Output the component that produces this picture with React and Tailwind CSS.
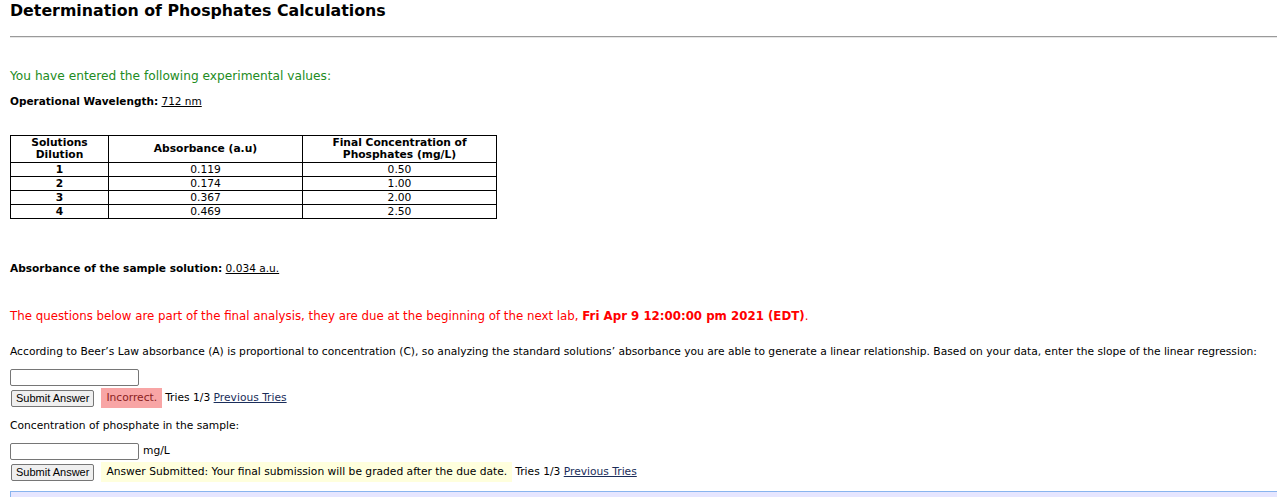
export default function App() {
  const rows = [
    ['1', '0.119', '0.50'],
    ['2', '0.174', '1.00'],
    ['3', '0.367', '2.00'],
    ['4', '0.469', '2.50'],
  ]

  return (
    <div className="min-h-[497px] bg-white pl-[10px] font-['DejaVu_Sans',Verdana,sans-serif] text-[12px] text-black">
      <h1 className="pt-[1px] text-[15.8px] font-bold leading-[19px]">Determination of Phosphates Calculations</h1>
      <div className="mt-[16px] h-[2px] border-t border-[#9a9a9a] border-b-[#e6e6e6] border-b" />

      <p className="mt-[30px] text-[12.2px] leading-[16px] text-[#228b22]">You have entered the following experimental values:</p>
      <p className="mt-[10px] text-[10.5px] leading-[14px]">
        <b>Operational Wavelength:</b> <span className="underline">712 nm</span>
      </p>

      <table className="mt-[27px] w-[487px] border-collapse border border-black text-[10.7px] leading-[12px]">
        <thead>
          <tr className="h-[27px]">
            <th className="w-[98px] border border-black font-bold">Solutions<br />Dilution</th>
            <th className="w-[194px] border border-black font-bold">Absorbance (a.u)</th>
            <th className="border border-black font-bold">Final Concentration of<br />Phosphates (mg/L)</th>
          </tr>
        </thead>
        <tbody>
          {rows.map((r) => (
            <tr key={r[0]} className="h-[14px]">
              <td className="border border-black text-center font-bold">{r[0]}</td>
              <td className="border border-black text-center">{r[1]}</td>
              <td className="border border-black text-center">{r[2]}</td>
            </tr>
          ))}
        </tbody>
      </table>

      <p className="mt-[42px] text-[10.6px] leading-[14px]">
        <b>Absorbance of the sample solution:</b> <span className="underline">0.034 a.u.</span>
      </p>

      <p className="mt-[33px] text-[11.8px] leading-[16px] text-[#ff0000]">
        The questions below are part of the final analysis, they are due at the beginning of the next lab,{' '}
        <b>Fri Apr 9 12:00:00 pm 2021 (EDT)</b>.
      </p>

      <p className="mt-[21px] whitespace-nowrap text-[10.7px] leading-[14px]">
        According to Beer’s Law absorbance (A) is proportional to concentration (C), so analyzing the standard solutions’ absorbance you are able to generate a linear relationship. Based on your data, enter the slope of the linear regression:
      </p>
      <div className="mt-[10px] flex">
        <input className="h-[17px] w-[129px] rounded-[2px] border border-[#767676] bg-white" />
      </div>
      <div className="mt-[2px] flex items-center text-[10.7px]">
        <button className="ml-[1px] h-[17px] rounded-[2px] border border-[#767676] bg-[#efefef] px-[4px] font-['Liberation_Sans',Arial,sans-serif] text-[11px] leading-[15px]">Submit Answer</button>
        <span className="ml-[7px] bg-[#f8a5a5] px-[5px] leading-[20px] text-[#8a1c1c]">Incorrect.</span>
        <span className="ml-[3px]">Tries 1/3 <span className="text-[#1a2d5a] underline">Previous Tries</span></span>
      </div>

      <p className="mt-[11px] text-[10.7px] leading-[14px]">Concentration of phosphate in the sample:</p>
      <div className="mt-[10px] flex items-center text-[10.7px]">
        <input className="h-[17px] w-[129px] rounded-[2px] border border-[#767676] bg-white" />
        <span className="ml-[4px]">mg/L</span>
      </div>
      <div className="mt-[2px] flex items-center text-[10.7px]">
        <button className="ml-[1px] h-[17px] rounded-[2px] border border-[#767676] bg-[#efefef] px-[4px] font-['Liberation_Sans',Arial,sans-serif] text-[11px] leading-[15px]">Submit Answer</button>
        <span className="ml-[7px] bg-[#ffffdd] px-[5px] leading-[20px]">Answer Submitted: Your final submission will be graded after the due date.</span>
        <span className="ml-[3px]">Tries 1/3 <span className="text-[#1a2d5a] underline">Previous Tries</span></span>
      </div>

      <div className="mt-[9px] h-[20px] border-t border-l border-[#88b4ee] bg-[#e6e6ff]" />
    </div>
  )
}
